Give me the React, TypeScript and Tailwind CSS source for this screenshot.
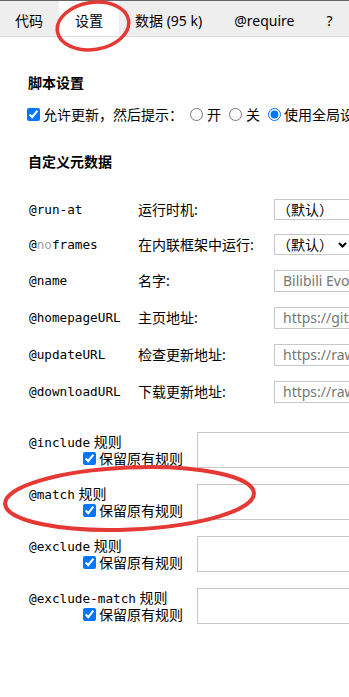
import React from "react";

const sans = { fontFamily: '"Noto Sans", "Noto Sans CJK SC", sans-serif' };
const mono = { fontFamily: '"DejaVu Sans Mono", "Noto Sans CJK SC", monospace' };

function Chevron() {
  return (
    <svg width="9" height="6" viewBox="0 0 9 6" className="shrink-0">
      <path d="M1 1 L4.5 4.5 L8 1" fill="none" stroke="#000" strokeWidth="2" />
    </svg>
  );
}

function Row({
  tag,
  label,
  h,
  children,
}: {
  tag: React.ReactNode;
  label: string;
  h: string;
  children: React.ReactNode;
}) {
  return (
    <div className={`flex items-center ${h}`}>
      <span className="w-[110px] shrink-0 text-[12.7px] leading-[18px] text-black pl-[1px]" style={mono}>
        {tag}
      </span>
      <span className="w-[136px] shrink-0 text-[14px] leading-[20px] text-black">{label}</span>
      {children}
    </div>
  );
}

function TextInput({ value }: { value: string }) {
  return (
    <div className="w-[200px] h-[22px] shrink-0 border border-[#c8c8c8] flex items-center pl-[8px] text-[14px] text-[#767676] whitespace-nowrap overflow-hidden">
      {value}
    </div>
  );
}

function Rule({ tag }: { tag: string }) {
  return (
    <div className="flex mb-[16px]">
      <div className="w-[169px] shrink-0 pt-[1px]">
        <div className="h-[17px] leading-[17px] whitespace-nowrap">
          <span className="text-[12.7px] pl-[1px]" style={mono}>
            {tag}
          </span>
          <span className="text-[14px]"> 规则</span>
        </div>
        <div className="h-[17px] leading-[17px] flex items-center pl-[55px] whitespace-nowrap">
          <input type="checkbox" defaultChecked className="m-0 mr-[3px] w-[13px] h-[13px] accent-[#0075ff]" />
          <span className="text-[14px]">保留原有规则</span>
        </div>
      </div>
      <div className="w-[200px] h-[36px] shrink-0 border border-[#c8c8c8]" />
    </div>
  );
}

export default function App() {
  return (
    <div className="relative w-[349px] h-[697px] overflow-hidden bg-white text-black" style={sans}>
      {/* Tab bar */}
      <div className="flex h-[37px] border-t border-[#666] border-b border-b-[#dcdcdc] bg-[#eeeeee] text-[14px]">
        <div className="h-full flex items-center pt-[3px] pl-[15px] pr-[16px]">代码</div>
        <div className="h-full flex items-center pt-[3px] px-[16px] bg-white">设置</div>
        <div className="h-full flex items-center pt-[3px] px-[16px] whitespace-nowrap">数据 (95 k)</div>
        <div className="h-full flex items-center pt-[3px] px-[16px]">@require</div>
        <div className="h-full flex items-center pt-[3px] px-[16px]">?</div>
      </div>

      <div className="pl-[28px]">
        <div className="mt-[36px] h-[20px] leading-[20px] text-[14px] font-bold">脚本设置</div>

        <div className="mt-[11px] h-[20px] flex items-center text-[14px] whitespace-nowrap -ml-[1px]">
          <input type="checkbox" defaultChecked className="m-0 mr-[3px] w-[13px] h-[13px] accent-[#0075ff]" />
          <span>允许更新，然后提示：</span>
          <input type="radio" name="upd" className="m-0 ml-[7px] mr-[4px] w-[13px] h-[13px]" />
          <span>开</span>
          <input type="radio" name="upd" className="m-0 ml-[8px] mr-[4px] w-[13px] h-[13px]" />
          <span>关</span>
          <input type="radio" name="upd" defaultChecked className="m-0 ml-[8px] mr-[3px] w-[13px] h-[13px] accent-[#0075ff]" />
          <span>使用全局设置</span>
        </div>

        <div className="mt-[28px] h-[20px] leading-[20px] text-[14px] font-bold">自定义元数据</div>

        <div className="mt-[20px]">
          <Row tag="@run-at" label="运行时机:" h="h-[35px]">
            <div className="w-[200px] h-[21px] shrink-0 border border-[#c8c8c8] flex items-center pl-[2px] text-[14px] whitespace-nowrap">
              （默认）
            </div>
          </Row>
          <Row
            tag={
              <>
                @<span className="text-[#a0a0a0]">no</span>frames
              </>
            }
            label="在内联框架中运行:"
            h="h-[35px]"
          >
            <div className="w-[86px] h-[21px] shrink-0 border border-[#c8c8c8] flex items-center justify-between pl-[2px] pr-[12px] text-[14px] whitespace-nowrap">
              <span>（默认）</span>
              <Chevron />
            </div>
          </Row>
          <Row tag="@name" label="名字:" h="h-[37px]">
            <TextInput value="Bilibili Evolved" />
          </Row>
          <Row tag="@homepageURL" label="主页地址:" h="h-[37px]">
            <TextInput value="https://github.com/the1812/Bilibili-Evolved" />
          </Row>
          <Row tag="@updateURL" label="检查更新地址:" h="h-[37px]">
            <TextInput value="https://raw.githubusercontent.com" />
          </Row>
          <Row tag="@downloadURL" label="下载更新地址:" h="h-[37px]">
            <TextInput value="https://raw.githubusercontent.com" />
          </Row>
        </div>

        <div className="mt-[22px]">
          <Rule tag="@include" />
          <Rule tag="@match" />
          <Rule tag="@exclude" />
          <Rule tag="@exclude-match" />
        </div>
      </div>

      {/* Red annotation ellipses */}
      <svg className="absolute inset-0 pointer-events-none" width="349" height="697" viewBox="0 0 349 697">
        <ellipse
          cx="93"
          cy="26"
          rx="36"
          ry="23.5"
          fill="none"
          stroke="#e53935"
          strokeWidth="3.5"
          transform="rotate(-9 93 26)"
        />
        <ellipse
          cx="129.5"
          cy="498.5"
          rx="124.5"
          ry="31"
          fill="none"
          stroke="#e53935"
          strokeWidth="4"
          transform="rotate(-2.5 129.5 498.5)"
        />
      </svg>
    </div>
  );
}
